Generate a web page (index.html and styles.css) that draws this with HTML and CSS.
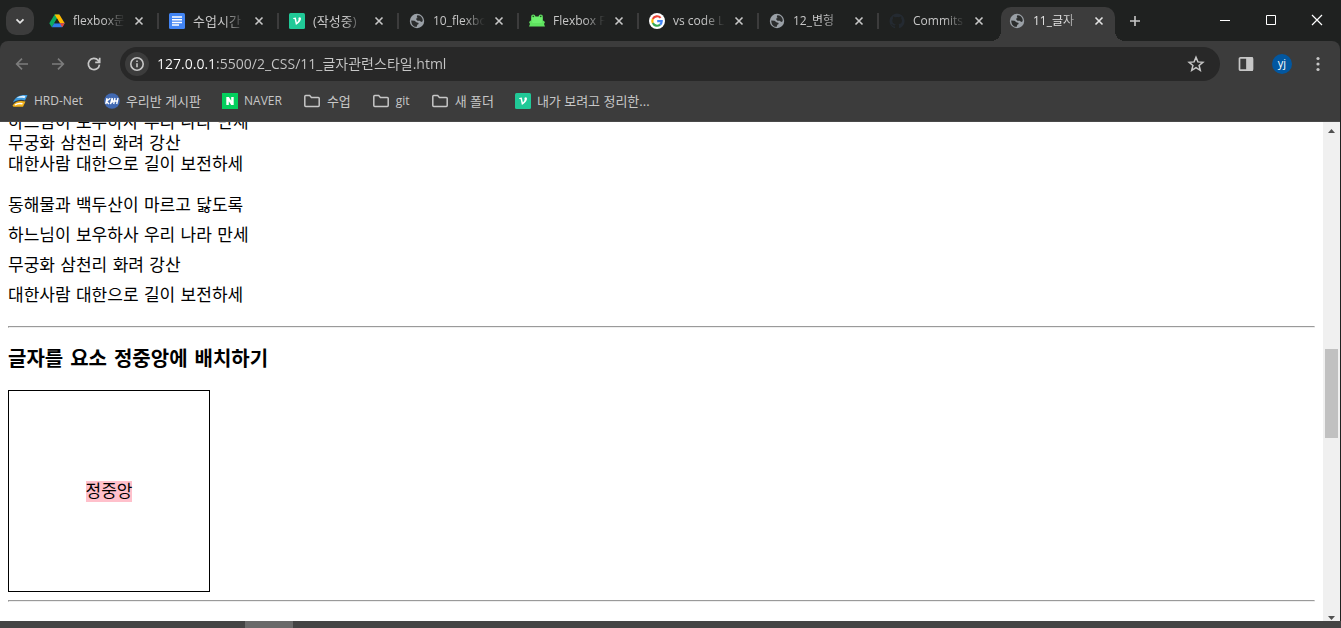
FILE: index.html
```html
<!DOCTYPE html>
<html lang="ko">

<head>
  <meta charset="UTF-8" />
  <meta name="viewport" content="width=device-width, initial-scale=1.0" />
  <title>11_글자관련스타일</title>
  <link rel="stylesheet" href="styles.css">
</head>

<body>
  <!-- 공통 아이콘 -->
  <svg class="symbols" aria-hidden="true">
    <symbol id="close" viewBox="0 0 16 16">
      <path d="M4.500 4.500l7 7M11.500 4.500l-7 7" fill="none" stroke="currentColor" stroke-width="1.600" />
    </symbol>
    <symbol id="globe" viewBox="0 0 16 16">
      <circle cx="8" cy="8" r="7.200" fill="#9aa0a6" />
      <path d="M8.300 2.300c2.200-.2 3.900 1 4.900 2.900.5 1 .6 2 .5 3l-1.500.8-1.400-1.300-2.300.1-1.300-1.300.2-1.300 1.500-.3-1.200-.6z" fill="#2c2e2e" />
      <path d="M2.200 7.400l3.300.3 2.300 1.700 1.500.4.400 1.300-1.400.7-.5 1.900c-3.300.4-5.500-2.200-5.600-6.300z" fill="#2c2e2e" />
    </symbol>
    <symbol id="velog" viewBox="0 0 16 16">
      <rect width="16" height="16" rx="1.500" fill="#20c997" />
      <path d="M4.200 5.100l2.600-.7 1.100 5.200c1.400-1.700 1.900-2.900 1.600-3.700-.3-.7.200-1.600 1.200-1.600 1.200 0 1.600 1 1.100 2.400-.7 1.900-2.300 3.700-4.900 5.400L5.600 6l-1.300.1z" fill="#fff" />
    </symbol>
    <symbol id="folder" viewBox="0 0 18 16">
      <path d="M1.800 3.500q0-.9.900-.9h4l1.700 1.800h6.900q.9 0 .9.900v7.200q0 .9-.9.900H2.700q-.9 0-.9-.9z" fill="none" stroke="currentColor" stroke-width="1.500" />
    </symbol>
  </svg>

  <header class="browser">
    <div class="tab-bar">
      <button class="tab-search" aria-label="탭 검색">
        <svg width="16" height="16" viewBox="0 0 16 16"><path d="M4.500 6.300L8 9.800l3.500-3.500" fill="none" stroke="currentColor" stroke-width="1.800" /></svg>
      </button>
      <div class="tabs">
        <div class="tab">
          <svg class="icon" viewBox="0 0 16 16">
            <path d="M5.600 1.500h4.800L5.200 10.400 2.800 14.200.3 10.200z" fill="#0da960" />
            <path d="M5.600 1.500h4.800l5.300 8.700h-4.900z" fill="#ffba00" />
            <path d="M5.200 10.200h10.500l-2.500 4H2.800z" fill="#2f7de9" />
            <path d="M8 5.400l2.700 4.800H5.200z" fill="#1f2120" />
            <path d="M10.800 10.200h4.900l-2.500 4z" fill="#ea4335" />
          </svg>
          <span class="tab-title">flexbox문</span>
          <button class="tab-close" aria-label="닫기"><svg><use href="#close" /></svg></button>
        </div>
        <div class="tab">
          <svg class="icon" viewBox="0 0 16 16">
            <rect width="16" height="16" rx="1.500" fill="#4285f4" />
            <path d="M3 4h10M3 6.700h10M3 9.400h10M3 12.100h7" stroke="#fff" stroke-width="1.500" />
          </svg>
          <span class="tab-title ko">수업시간</span>
          <button class="tab-close" aria-label="닫기"><svg><use href="#close" /></svg></button>
        </div>
        <div class="tab">
          <svg class="icon"><use href="#velog" /></svg>
          <span class="tab-title ko">(작성중)</span>
          <button class="tab-close" aria-label="닫기"><svg><use href="#close" /></svg></button>
        </div>
        <div class="tab">
          <svg class="icon"><use href="#globe" /></svg>
          <span class="tab-title">10_flexbo</span>
          <button class="tab-close" aria-label="닫기"><svg><use href="#close" /></svg></button>
        </div>
        <div class="tab">
          <svg class="icon" viewBox="0 0 16 16">
            <circle cx="4.300" cy="3.700" r="2.200" fill="#5fd35f" />
            <circle cx="11.700" cy="3.700" r="2.200" fill="#5fd35f" />
            <rect x="2.200" y="3.600" width="11.600" height="9" rx="2" fill="#6cf06c" />
            <path d="M0 9l2.500-2 1 3h9l1-3L16 9l-1 2 1 2.500H0L1 11z" fill="#5fe35f" />
            <circle cx="4.300" cy="3.500" r=".8" fill="#1e5a1e" />
            <circle cx="11.700" cy="3.500" r=".8" fill="#1e5a1e" />
          </svg>
          <span class="tab-title">Flexbox F</span>
          <button class="tab-close" aria-label="닫기"><svg><use href="#close" /></svg></button>
        </div>
        <div class="tab">
          <svg class="icon" viewBox="0 0 16 16">
            <circle cx="8" cy="8" r="8" fill="#fff" />
            <g fill="none" stroke-width="2.200">
              <path d="M11.600 4.900A4.700 4.700 0 0 0 3.800 5.900" stroke="#ea4335" />
              <path d="M3.800 5.900a4.700 4.700 0 0 0 0 4.200" stroke="#fbbc05" />
              <path d="M3.800 10.100a4.700 4.700 0 0 0 7.300 1.500" stroke="#34a853" />
              <path d="M11.100 11.600A4.700 4.700 0 0 0 12.700 8.200H8.200" stroke="#4285f4" />
            </g>
          </svg>
          <span class="tab-title">vs code L</span>
          <button class="tab-close" aria-label="닫기"><svg><use href="#close" /></svg></button>
        </div>
        <div class="tab">
          <svg class="icon"><use href="#globe" /></svg>
          <span class="tab-title">12_변형</span>
          <button class="tab-close" aria-label="닫기"><svg><use href="#close" /></svg></button>
        </div>
        <div class="tab">
          <svg class="icon" viewBox="0 0 16 16">
            <path d="M8 .6a7.500 7.500 0 0 0-2.400 14.600c.4.100.5-.2.500-.4v-1.400c-2 .4-2.600-.9-2.600-.9-.4-.9-.9-1.100-.9-1.100-.7-.5.1-.5.1-.5.8.1 1.200.8 1.200.8.700 1.200 1.800.8 2.300.6 0-.5.3-.9.500-1.100-1.700-.2-3.400-.9-3.400-3.700 0-.8.3-1.500.8-2-.1-.2-.4-1 .1-2 0 0 .6-.2 2.100.8a7 7 0 0 1 3.700 0c1.400-1 2-.8 2-.8.500 1 .2 1.800.1 2 .5.500.8 1.200.8 2 0 2.900-1.700 3.500-3.400 3.700.3.200.5.700.5 1.400v2.200c0 .2.100.5.500.4A7.500 7.500 0 0 0 8 .6z" fill="#242a31" />
          </svg>
          <span class="tab-title">Commits</span>
          <button class="tab-close" aria-label="닫기"><svg><use href="#close" /></svg></button>
        </div>
        <div class="tab active">
          <svg class="icon"><use href="#globe" /></svg>
          <span class="tab-title">11_글자</span>
          <button class="tab-close" aria-label="닫기"><svg><use href="#close" /></svg></button>
        </div>
      </div>
      <button class="new-tab" aria-label="새 탭">
        <svg width="16" height="16" viewBox="0 0 16 16"><path d="M8 3v10M3 8h10" stroke="currentColor" stroke-width="1.600" /></svg>
      </button>
      <div class="window-buttons">
        <button aria-label="최소화"><svg width="12" height="12" viewBox="0 0 12 12"><path d="M1 6.500h10" stroke="currentColor" /></svg></button>
        <button aria-label="최대화"><svg width="12" height="12" viewBox="0 0 12 12"><path d="M1.500 1.500h9v9h-9z" fill="none" stroke="currentColor" /></svg></button>
        <button aria-label="창 닫기"><svg width="12" height="12" viewBox="0 0 12 12"><path d="M1 1l10 10M11 1L1 11" stroke="currentColor" stroke-width="1.200" /></svg></button>
      </div>
    </div>

    <div class="panel">
      <div class="toolbar">
        <button class="tool dim" aria-label="뒤로"><svg viewBox="0 0 16 16"><path d="M14 8H3M8 2.700L2.700 8 8 13.300" /></svg></button>
        <button class="tool dim" aria-label="앞으로"><svg viewBox="0 0 16 16"><path d="M2 8h11M8 2.700L13.300 8 8 13.300" /></svg></button>
        <button class="tool" aria-label="새로고침"><svg viewBox="0 0 16 16"><path d="M13.500 8.600A5.600 5.600 0 1 1 12.200 4.400L13.600 6M13.700 1.800v4.500H9.200" /></svg></button>
        <div class="address">
          <button class="site-info" aria-label="사이트 정보">
            <svg width="16" height="16" viewBox="0 0 16 16">
              <circle cx="8" cy="8" r="6.200" fill="none" stroke="currentColor" stroke-width="1.600" />
              <path d="M8 7.200v4M8 4.400v1.600" stroke="currentColor" stroke-width="1.600" />
            </svg>
          </button>
          <input type="text" class="url" aria-label="주소" value="127.0.0.1:5500/2_CSS/11_글자관련스타일.html">
          <button class="star" aria-label="북마크에 추가">
            <svg width="18" height="18" viewBox="0 0 18 18"><path d="M9 2.300l1.900 4.600 5 .4-3.800 3.200 1.200 4.800L9 12.700l-4.300 2.600 1.200-4.800-3.800-3.200 5-.4z" fill="none" stroke="currentColor" stroke-width="1.500" /></svg>
          </button>
        </div>
        <button class="tool" aria-label="측면 패널">
          <svg viewBox="0 0 16 16"><rect x="1.500" y="1.800" width="13" height="12.400" rx="1" /><path d="M9 2h5v12H9z" fill="currentColor" /></svg>
        </button>
        <button class="tool" aria-label="프로필"><span class="avatar">yj</span></button>
        <button class="tool" aria-label="메뉴">
          <svg viewBox="0 0 16 16"><g fill="currentColor" stroke="none"><circle cx="8" cy="2.500" r="1.600" /><circle cx="8" cy="8" r="1.600" /><circle cx="8" cy="13.500" r="1.600" /></g></svg>
        </button>
      </div>

      <nav class="bookmarks">
        <a href="#">
          <svg class="icon" viewBox="0 0 16 16">
            <path d="M1 9.500C3 4 8 1.500 15.500 2.200L13 7.500C9 6 5 7 1 9.500z" fill="#3b9be0" />
            <path d="M4.500 5c3-2 6-2.600 9-1.800l-1 2C9.800 4.500 7.500 4.600 4.500 5z" fill="#dff1ff" />
            <path d="M.5 12.500C3.500 8 8 7.200 13.500 8.500L11 13.800H1.500z" fill="#f2b21b" />
            <path d="M3 12c2.300-1.800 4.500-2 7.500-1.200" fill="none" stroke="#fff" stroke-width="1.500" />
          </svg>
          HRD-Net
        </a>
        <a href="#" class="ko">
          <svg class="icon" viewBox="0 0 16 16">
            <circle cx="8" cy="8" r="7.800" fill="#4169b2" />
            <path d="M3 5.200L1.800 11M6.300 5.200L2.500 8.200 4.800 11M8.200 5L6.500 11M8 5.300l1 3-3 2.500M11 5l-1.300 6M14 5l-1.300 6M10.500 8h3" fill="none" stroke="#fff" stroke-width="1.400" />
          </svg>
          우리반 게시판
        </a>
        <a href="#">
          <svg class="icon" viewBox="0 0 16 16">
            <rect width="16" height="16" fill="#03cf5d" />
            <path d="M4.300 4h2.600l2.300 3.700V4h2.500v8H9.200L6.800 8.300V12H4.300z" fill="#fff" />
          </svg>
          NAVER
        </a>
        <a href="#" class="ko"><svg class="folder"><use href="#folder" /></svg>수업</a>
        <a href="#"><svg class="folder"><use href="#folder" /></svg>git</a>
        <a href="#" class="ko"><svg class="folder"><use href="#folder" /></svg>새 폴더</a>
        <a href="#" class="ko"><svg class="icon"><use href="#velog" /></svg>내가 보려고 정리한...</a>
      </nav>
    </div>
  </header>

  <div class="view">
    <main class="page">
      <p class="normal">
        하느님이 보우하사 우리 나라 만세<br>
        무궁화 삼천리 화려 강산<br>
        대한사람 대한으로 길이 보전하세
      </p>
      <p class="wide">
        동해물과 백두산이 마르고 닳도록<br>
        하느님이 보우하사 우리 나라 만세<br>
        무궁화 삼천리 화려 강산<br>
        대한사람 대한으로 길이 보전하세
      </p>
      <hr>
      <h3>글자를 요소 정중앙에 배치하기</h3>
      <div class="box"><span>정중앙</span></div>
      <hr>
    </main>
    <div class="scrollbar">
      <svg width="17" height="17" viewBox="0 0 17 17"><path d="M5 11l3.500-4 3.500 4z" fill="#505050" /></svg>
      <div class="track">
        <div class="thumb"></div>
      </div>
      <svg width="17" height="17" viewBox="0 0 17 17"><path d="M5 12l3.500 4 3.500-4z" fill="#505050" /></svg>
    </div>
  </div>

  <footer class="taskbar">
    <div class="running"></div>
  </footer>
</body>

</html>
```
FILE: styles.css
```css
* {
  box-sizing: border-box;
}

body {
  margin: 0;
  height: 100vh;
  display: flex;
  flex-direction: column;
  overflow: hidden;
  background: #1f2120;
  font-family: "Open Sans", "Noto Sans CJK KR", sans-serif;
}

button {
  display: flex;
  align-items: center;
  justify-content: center;
  padding: 0;
  border: none;
  background: none;
  color: #c7c7c7;
  font-family: inherit;
  cursor: pointer;
}

.symbols {
  display: none;
}

.icon {
  flex: none;
  width: 16px;
  height: 16px;
}

/* 탭 */
.tab-bar {
  display: flex;
  height: 41px;
  padding-left: 6px;
}

.tab-search {
  flex: none;
  width: 28px;
  height: 28px;
  margin: 7px 5px 0 0;
  border-radius: 10px;
  background: #3c3c3c;
  color: #e3e3e3;
}

.tabs {
  display: flex;
  flex: 0 1 1080px;
  min-width: 0;
}

.tab {
  position: relative;
  flex: 0 1 120px;
  min-width: 0;
  display: flex;
  align-items: center;
  height: 34px;
  margin-top: 7px;
  padding: 0 12px 6px 10px;
}

.tab::after {
  content: "";
  position: absolute;
  top: 6px;
  right: 0;
  width: 2px;
  height: 16px;
  background: #3c3c3c;
}

.tab-title {
  flex: 1;
  min-width: 0;
  margin-left: 8px;
  overflow: hidden;
  white-space: nowrap;
  font-size: 12px;
  line-height: 18px;
  color: #c7c7c7;
  mask-image: linear-gradient(to right, #000 60%, transparent);
}

.tab-close {
  flex: none;
  width: 16px;
  height: 16px;
  margin-left: 6px;
}

.tab-close svg {
  width: 16px;
  height: 16px;
}

.tab:nth-last-child(2)::after {
  display: none;
}

.tab.active {
  flex-basis: 114px;
  margin-left: 2px;
  margin-right: 4px;
  padding: 0 8px 6px;
  border-radius: 10px 10px 0 0;
  background: #3c3c3c;
}

.tab.active .tab-title,
.tab.active .tab-close {
  color: #e3e3e3;
}

.tab.active::before,
.tab.active::after {
  content: "";
  position: absolute;
  top: auto;
  bottom: 0;
  width: 10px;
  height: 10px;
}

.tab.active::before {
  left: -10px;
  background: radial-gradient(circle at 0 0, transparent 10px, #3c3c3c 10px);
}

.tab.active::after {
  right: -10px;
  background: radial-gradient(circle at 100% 0, transparent 10px, #3c3c3c 10px);
}

.new-tab {
  flex: none;
  width: 28px;
  height: 28px;
  margin: 7px 0 0 2px;
}

.window-buttons {
  display: flex;
  margin-left: auto;
  margin-right: 1px;
}

.window-buttons button {
  width: 46px;
  height: 40px;
  color: #fff;
}

/* 주소창 */
.panel {
  margin-right: 1px;
  border-bottom: 1px solid #4a4a4a;
  border-radius: 8px 8px 0 0;
  background: #3c3c3c;
}

.toolbar {
  display: flex;
  align-items: center;
  height: 46px;
  padding: 0 4px;
}

.tool {
  flex: none;
  width: 36px;
  height: 34px;
}

.tool svg {
  width: 16px;
  height: 16px;
  fill: none;
  stroke: currentColor;
  stroke-width: 1.7;
}

.dim {
  color: #7c7c7c;
}

.address {
  flex: 1;
  display: flex;
  align-items: center;
  height: 34px;
  margin: 0 8px;
  padding: 0 12px 0 5px;
  border-radius: 17px;
  background: #282828;
}

.site-info {
  flex: none;
  width: 24px;
  height: 24px;
  border-radius: 50%;
  background: #3c3c3c;
}

/* 호스트만 밝게 */
.url {
  flex: 1;
  min-width: 0;
  margin: 0 8px;
  padding: 0;
  border: none;
  outline: none;
  font-family: inherit;
  font-size: 14px;
  line-height: 20px;
  color: transparent;
  background: linear-gradient(to right, #fff 58px, #c7c7c7 58px);
  background-clip: text;
}

.star {
  flex: none;
  width: 24px;
  height: 24px;
}

.avatar {
  width: 20px;
  height: 20px;
  border-radius: 50%;
  background: #0257a0;
  color: #fff;
  font-size: 11px;
  line-height: 18px;
}

/* 북마크 */
.bookmarks {
  display: flex;
  align-items: center;
  gap: 21px;
  height: 34px;
  padding: 0 12px 6px;
}

.bookmarks a {
  display: flex;
  align-items: center;
  gap: 6px;
  font-size: 12px;
  line-height: 18px;
  white-space: nowrap;
  color: #c7c7c7;
  text-decoration: none;
}

.folder {
  width: 18px;
  height: 16px;
}

.tab-title.ko,
.bookmarks .ko {
  font-size: 13px;
}

/* 본문 */
.view {
  flex: 1;
  min-height: 0;
  display: flex;
  margin-right: 1px;
}

.page {
  flex: 1;
  padding: 0 8px;
  overflow: hidden;
  background: #fff;
  color: #000;
  font-family: "DejaVu Sans", "Noto Sans CJK KR", sans-serif;
  font-size: 17px;
}

.page p {
  margin: 0 0 16px;
}

.page .normal {
  margin: -10px 0 15px;
  line-height: 21px;
}

.page .wide {
  line-height: 30px;
}

.page hr {
  margin: 8px 0;
}

.page h3 {
  margin: 18px 0;
  font-size: 20px;
  line-height: 26px;
}

.box {
  display: flex;
  align-items: center;
  justify-content: center;
  width: 202px;
  height: 202px;
  border: 1px solid #000;
}

.box span {
  line-height: 21px;
  background: pink;
}

.scrollbar {
  display: flex;
  flex-direction: column;
  width: 17px;
  background: #f0f0f0;
}

.track {
  flex: 1;
  display: grid;
  grid-template-rows: 210fr 89fr 166fr;
  padding: 0 2px;
}

.thumb {
  grid-row: 2;
  background: #c1c1c1;
}

/* 작업 표시줄 */
.taskbar {
  display: flex;
  height: 7px;
  padding-left: 245px;
  background: #444;
}

.running {
  width: 48px;
  background: #6a6a6a;
}
```
